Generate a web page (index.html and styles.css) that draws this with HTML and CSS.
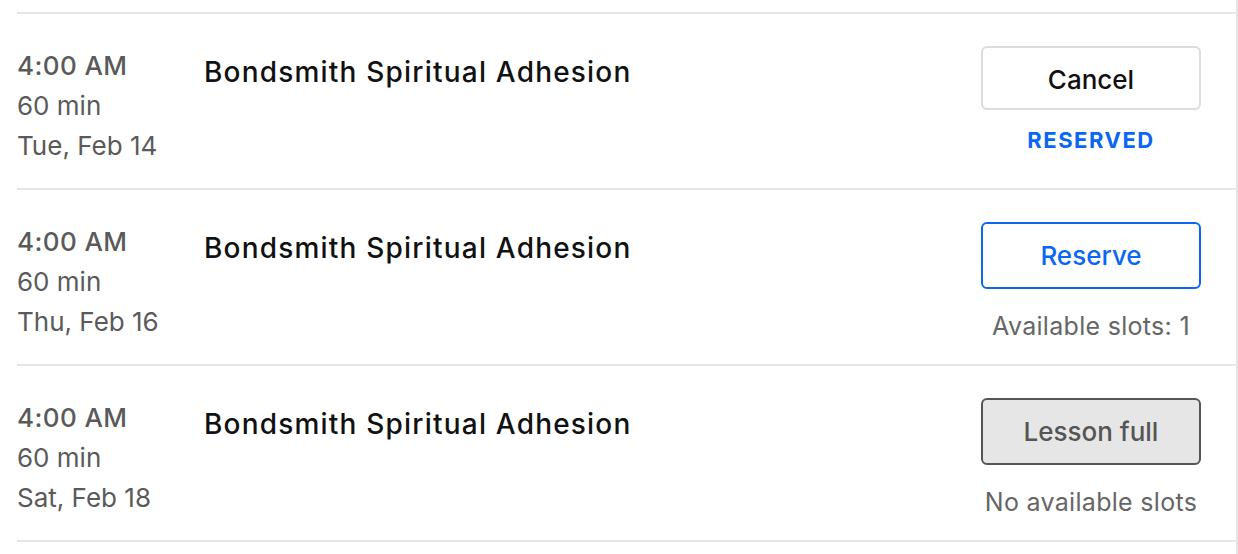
FILE: index.html
```html
<!DOCTYPE html>
<html lang="en">
<head>
<meta charset="utf-8">
<title>Lessons</title>
<link rel="stylesheet" href="styles.css">
</head>
<body>
<div class="page">
  <ul class="lessons">
    <li class="lesson">
      <div class="when">
        <div class="time">4:00 AM</div>
        <div class="meta">60 min</div>
        <div class="meta">Tue, Feb 14</div>
      </div>
      <div class="title">Bondsmith Spiritual Adhesion</div>
      <div class="action">
        <button class="btn btn-cancel">Cancel</button>
        <div class="status status-reserved">RESERVED</div>
      </div>
    </li>
    <li class="lesson">
      <div class="when">
        <div class="time">4:00 AM</div>
        <div class="meta">60 min</div>
        <div class="meta">Thu, Feb 16</div>
      </div>
      <div class="title">Bondsmith Spiritual Adhesion</div>
      <div class="action">
        <button class="btn btn-reserve">Reserve</button>
        <div class="status">Available slots: 1</div>
      </div>
    </li>
    <li class="lesson">
      <div class="when">
        <div class="time">4:00 AM</div>
        <div class="meta">60 min</div>
        <div class="meta">Sat, Feb 18</div>
      </div>
      <div class="title">Bondsmith Spiritual Adhesion</div>
      <div class="action">
        <button class="btn btn-full" disabled>Lesson full</button>
        <div class="status">No available slots</div>
      </div>
    </li>
  </ul>
</div>
</body>
</html>
```

FILE: styles.css
```css
html, body {
  margin: 0;
  padding: 0;
  background: #fff;
}

body {
  font-family: Inter, "Liberation Sans", sans-serif;
  color: #111;
}

.page {
  width: 1219px;
  min-height: 554px;
  padding: 12px 0 0 17px;
  border-right: 2px solid #e6e6e6;
  box-sizing: content-box;
}

.lessons {
  list-style: none;
  margin: 0;
  padding: 0;
  border-bottom: 2px solid #e6e6e6;
}

.lesson {
  display: grid;
  grid-template-columns: 187px 1fr 220px;
  height: 174px;
  box-sizing: content-box;
  padding: 0 35px 0 0;
  border-top: 2px solid #e6e6e6;
}

.when {
  padding-top: 32px;
  color: #5a5a5a;
}

.time {
  font-size: 26px;
  line-height: 40px;
  font-weight: 500;
  letter-spacing: 0.4px;
}

.meta {
  font-size: 26px;
  line-height: 40px;
  letter-spacing: 0;
}

.title {
  padding-top: 38px;
  font-size: 28px;
  line-height: 40px;
  font-weight: 500;
  letter-spacing: 1.2px;
  color: #111;
}

.action {
  padding-top: 32px;
  display: flex;
  flex-direction: column;
  align-items: center;
}

.btn {
  width: 220px;
  height: 67px;
  border-radius: 6px;
  font-family: inherit;
  font-size: 26px;
  font-weight: 500;
  background: #fff;
  cursor: pointer;
}

.btn-cancel {
  height: 64px;
  padding-top: 4px;
  border: 2px solid #dcdcdc;
  color: #111;
}

.btn-reserve {
  border: 2px solid #0a66f5;
  color: #0a66f5;
}

.btn-full {
  border: 2px solid #555;
  background: #e6e6e6;
  color: #555;
}

.status {
  margin-top: 22px;
  font-size: 25px;
  line-height: 30px;
  letter-spacing: 0.3px;
  color: #666;
}

.status-reserved {
  margin-top: 15px;
  font-size: 22px;
  font-weight: 700;
  letter-spacing: 1.5px;
  color: #0a66f5;
}
```
